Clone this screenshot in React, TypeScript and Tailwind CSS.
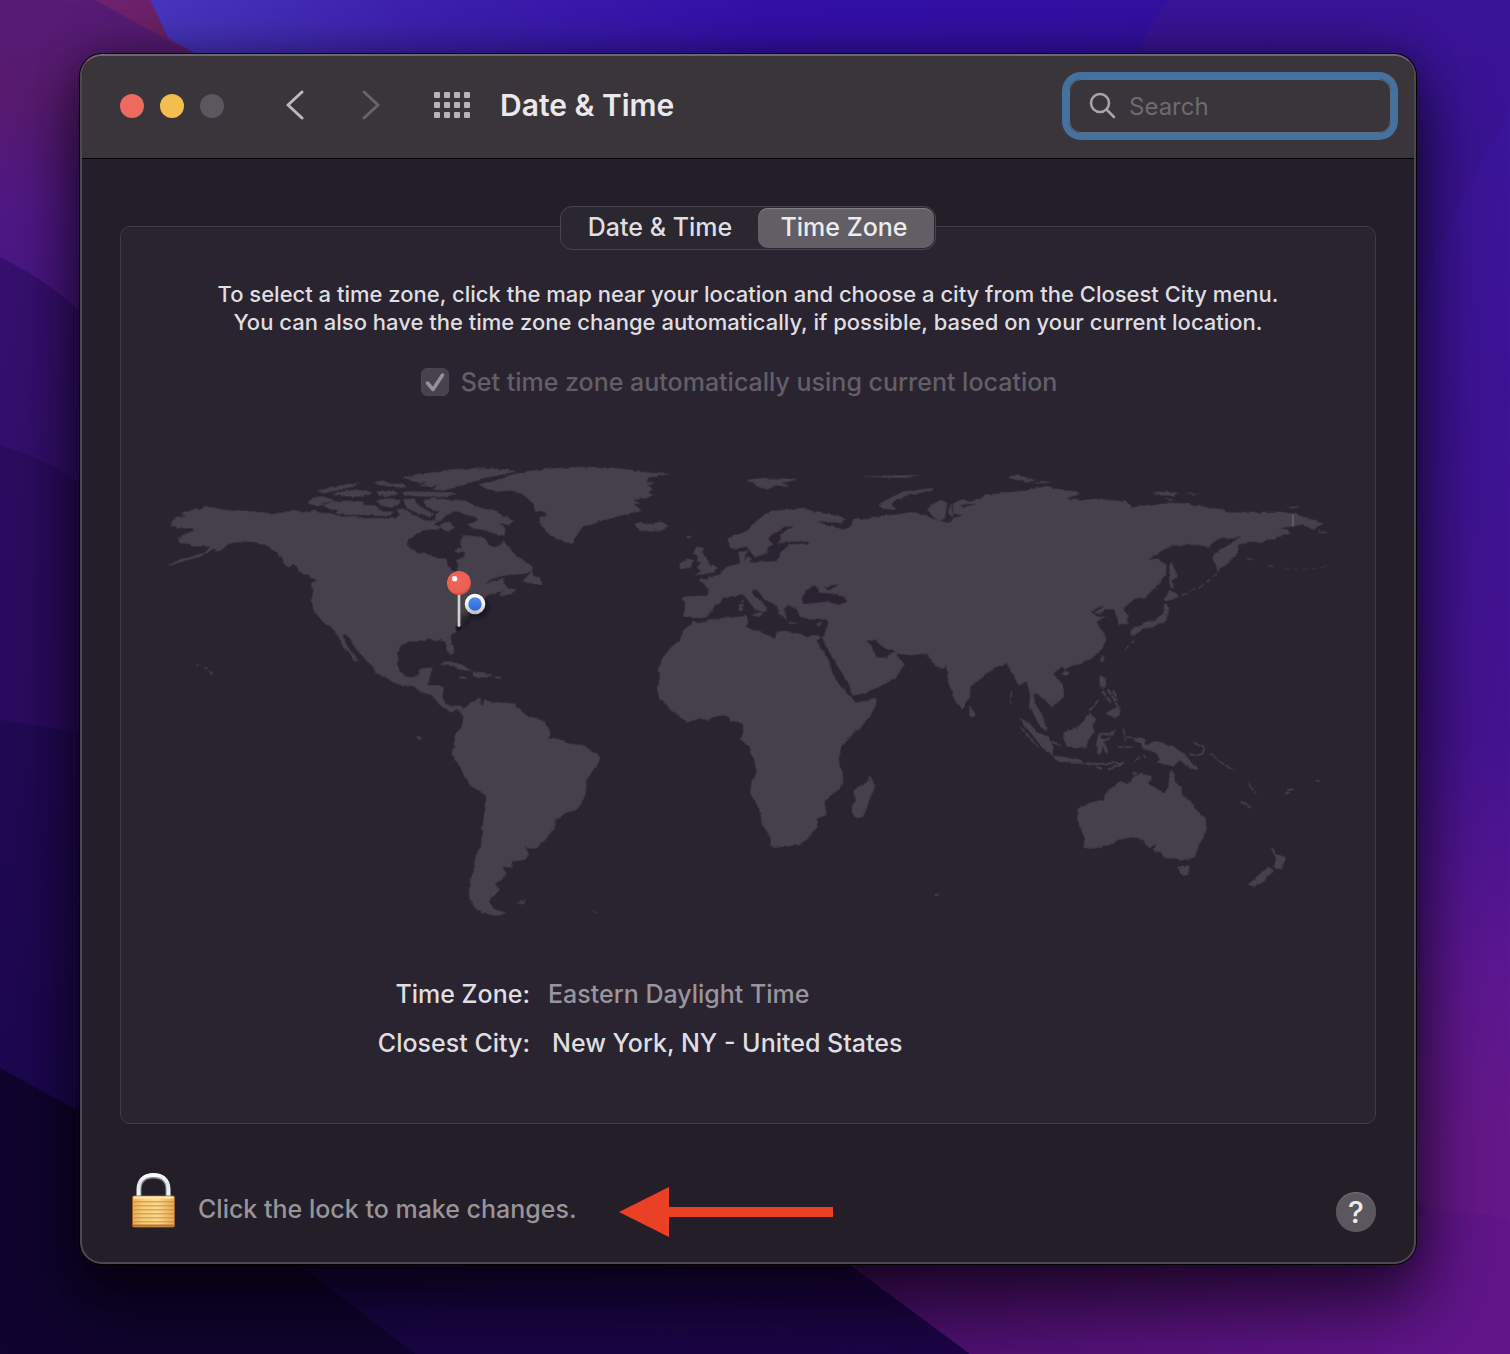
import React from "react";

function Wallpaper() {
  return (
    <svg
      className="absolute inset-0 h-full w-full"
      viewBox="0 0 1510 1354"
      preserveAspectRatio="none"
      aria-hidden="true"
    >
      <defs>
        <linearGradient id="wTop" x1="150" y1="0" x2="1510" y2="0" gradientUnits="userSpaceOnUse">
          <stop offset="0" stopColor="#4736bd" />
          <stop offset="0.2" stopColor="#3d20ad" />
          <stop offset="0.45" stopColor="#3410a8" />
          <stop offset="0.75" stopColor="#3310a0" />
          <stop offset="1" stopColor="#37119a" />
        </linearGradient>
        <linearGradient id="wRight" x1="0" y1="0" x2="0" y2="1354" gradientUnits="userSpaceOnUse">
          <stop offset="0" stopColor="#391496" />
          <stop offset="0.3" stopColor="#3b128e" />
          <stop offset="0.55" stopColor="#441390" />
          <stop offset="0.72" stopColor="#5c1790" />
          <stop offset="0.85" stopColor="#651888" />
          <stop offset="1" stopColor="#5c1384" />
        </linearGradient>
        <linearGradient id="wEdge" x1="0" y1="100" x2="0" y2="800" gradientUnits="userSpaceOnUse">
          <stop offset="0" stopColor="#3a159a" />
          <stop offset="0.5" stopColor="#3e1394" />
          <stop offset="1" stopColor="#45148f" stopOpacity="0" />
        </linearGradient>
        <linearGradient id="wLeft" x1="0" y1="0" x2="0" y2="320" gradientUnits="userSpaceOnUse">
          <stop offset="0" stopColor="#561c76" />
          <stop offset="0.3" stopColor="#591b70" />
          <stop offset="0.65" stopColor="#501885" />
          <stop offset="1" stopColor="#471683" />
        </linearGradient>
        <linearGradient id="wPink" x1="100" y1="0" x2="190" y2="50" gradientUnits="userSpaceOnUse">
          <stop offset="0" stopColor="#702272" />
          <stop offset="1" stopColor="#69205f" />
        </linearGradient>
        <linearGradient id="wL2" x1="0" y1="257" x2="0" y2="480" gradientUnits="userSpaceOnUse">
          <stop offset="0" stopColor="#371071" />
          <stop offset="1" stopColor="#330f6c" />
        </linearGradient>
        <linearGradient id="wL3" x1="0" y1="445" x2="0" y2="730" gradientUnits="userSpaceOnUse">
          <stop offset="0" stopColor="#2c0c60" />
          <stop offset="1" stopColor="#2b0b60" />
        </linearGradient>
        <linearGradient id="wL4" x1="0" y1="720" x2="0" y2="1110" gradientUnits="userSpaceOnUse">
          <stop offset="0" stopColor="#220955" />
          <stop offset="1" stopColor="#1c0750" />
        </linearGradient>
        <linearGradient id="wBottom" x1="300" y1="0" x2="970" y2="0" gradientUnits="userSpaceOnUse">
          <stop offset="0" stopColor="#180645" />
          <stop offset="1" stopColor="#1d0448" />
        </linearGradient>
        <linearGradient id="wPlum" x1="850" y1="0" x2="1400" y2="0" gradientUnits="userSpaceOnUse">
          <stop offset="0" stopColor="#4b0f6c" />
          <stop offset="1" stopColor="#601589" />
        </linearGradient>
      </defs>
      <rect width="1510" height="1354" fill="url(#wTop)" />
      <path d="M1168 0C1145 30 1120 80 1110 140V1354H1510V0Z" fill="url(#wRight)" />
      <path d="M1510 110C1480 170 1430 240 1416 330V800H1510Z" fill="url(#wEdge)" />
      <path d="M0 0H150L168 38L260 90V340H0Z" fill="url(#wLeft)" />
      <path d="M95 0H150L168 38L193 54Z" fill="url(#wPink)" />
      <path d="M0 257C30 272 60 290 100 330V520H0Z" fill="url(#wL2)" />
      <path d="M0 445C30 455 60 465 100 500V760H0Z" fill="url(#wL3)" />
      <path d="M0 720L100 736V1130H0Z" fill="url(#wL4)" />
      <path d="M200 1200H900L970 1354H300Z" fill="url(#wBottom)" />
      <path d="M0 1068L80 1112L290 1258L415 1354H0Z" fill="#10042f" />
      <path d="M760 1200L850 1265L970 1354H1510V1180L1420 1165V1200Z" fill="url(#wPlum)" />
      <path d="M1400 1200C1440 1215 1470 1208 1510 1220V1140H1400Z" fill="#651888" />
    </svg>
  );
}

function WorldMap() {
  return (
    <svg
      className="block h-auto w-full"
      viewBox="0 0 3600 1440"
      role="img"
      aria-label="World map with a pin near New York"
    >
      <defs>
        <filter id="coast" x="0" y="0" width="3600" height="1440" filterUnits="userSpaceOnUse">
          <feTurbulence type="fractalNoise" baseFrequency="0.05" numOctaves="2" seed="4" result="n" />
          <feDisplacementMap in="SourceGraphic" in2="n" scale="10" xChannelSelector="R" yChannelSelector="G" />
        </filter>
        <linearGradient id="dotRing" x1="0" y1="0" x2="0" y2="1">
          <stop offset="0" stopColor="#ffffff" />
          <stop offset="0.5" stopColor="#f2f2f2" />
          <stop offset="1" stopColor="#b9b9bb" />
        </linearGradient>
        <linearGradient id="dotCore" x1="0" y1="0" x2="0" y2="1">
          <stop offset="0" stopColor="#4a8cf7" />
          <stop offset="1" stopColor="#2f68cf" />
        </linearGradient>
        <radialGradient id="pinHead" cx="0.45" cy="0.4" r="0.6">
          <stop offset="0" stopColor="#f0665a" />
          <stop offset="0.8" stopColor="#ea6054" />
          <stop offset="1" stopColor="#c94d43" />
        </radialGradient>
        <filter id="soft" x="-50%" y="-50%" width="200%" height="200%">
          <feGaussianBlur stdDeviation="6" />
        </filter>
      </defs>

      <g filter="url(#coast)" fill="#453f4a">
        {/* North America */}
        <path d="M62 225L78 200L105 200L90 192L130 178L175 170L230 180L290 183L345 188L370 192L400 185L440 182L480 186L490 178L510 188L545 190L575 200L620 198L645 204L690 204L735 205L750 195L745 180L770 185L790 195L810 200L835 215L860 205L865 215L850 222L880 232L865 240L845 238L820 242L800 252L780 265L770 280L785 298L810 308L840 315L865 325L890 325L892 345L905 360L918 365L925 350L918 330L940 322L945 308L930 290L932 270L940 255L975 258L1000 262L1015 285L1030 292L1050 285L1062 272L1080 295L1100 318L1125 335L1148 350L1148 362L1120 372L1080 375L1055 378L1030 385L1005 403L1035 390L1065 385L1060 400L1075 415L1100 418L1112 410L1090 427L1060 438L1048 434L1060 422L1040 427L1015 435L1005 445L1000 460L975 480L955 500L950 515L935 525L915 545L902 558L905 575L912 595L912 612L905 618L893 600L885 575L865 570L855 575L840 565L820 570L800 575L775 575L750 590L745 610L742 640L750 660L765 678L785 682L805 675L812 655L848 652L840 680L832 705L870 707L882 712L877 745L890 765L915 770L930 765L942 775L935 787L920 777L905 788L880 775L860 755L845 735L810 725L790 708L750 705L715 690L675 665L668 650L640 622L620 600L600 570L590 555L578 552L585 575L600 600L615 615L628 635L615 630L600 610L580 595L570 570L555 545L545 535L525 522L505 500L490 480L485 450L490 420L485 398L500 392L480 380L455 370L435 345L415 350L400 340L395 320L375 305L355 290L330 280L290 275L255 278L235 282L215 300L195 308L195 295L150 320L110 332L60 347L55 345L90 328L130 318L165 305L180 290L150 290L125 290L120 282L90 280L82 262L110 250L132 240L130 235L80 235Z" />
        {/* Arctic archipelago */}
        <path d="M472 160L485 143L515 138L555 150L520 160L505 172ZM515 165L545 155L600 152L640 155L640 165L670 165L700 185L730 185L725 195L690 198L640 195L590 195L555 190L565 180L540 178ZM545 135L575 125L620 118L655 125L668 130L640 140L600 140ZM498 124L540 112L590 102L630 98L600 112L560 122L520 128ZM665 95L700 92L725 102L760 100L770 112L730 112L690 105ZM675 125L710 120L745 128L735 138L690 138ZM680 150L710 145L748 148L745 165L715 172L690 165ZM755 85L800 72L860 65L900 58L980 55L1070 58L1100 65L1050 75L1000 85L970 95L930 110L880 122L840 118L860 110L800 108L830 100L790 95ZM760 124L840 125L900 127L925 132L880 141L800 139L760 134ZM760 148L790 145L800 160L820 175L850 190L840 202L800 188L770 175ZM740 178L760 175L775 190L750 198ZM820 150L850 144L900 148L950 152L970 165L1010 178L1040 182L1060 200L1093 212L1075 225L1050 220L1070 240L1060 258L1030 250L1000 240L965 234L950 225L985 205L950 195L920 185L890 195L870 215L850 205L865 185L830 172ZM870 222L900 215L915 232L895 245L875 238ZM915 300L935 292L945 305L925 312ZM1125 385L1145 362L1150 378L1170 382L1177 400L1170 406L1145 400L1120 398Z" />
        {/* Caribbean and Hawaii */}
        <path d="M868 642L895 633L925 640L950 652L970 664L935 660L905 646ZM968 666L1000 666L1028 678L985 684L970 680ZM930 680h18v6h-18ZM1036 680h18v6h-18ZM176 662L190 668L184 677ZM140 644h8v6h-8ZM162 652h8v5h-8Z" />
        {/* Greenland, Iceland, South America */}
        <g transform="translate(750 0)">
          <path d="M232 103L270 95L300 88L330 75L390 62L450 55L550 50L640 53L700 60L720 65L810 72L770 80L745 82L740 95L765 100L745 105L760 115L745 130L760 135L735 145L700 150L725 160L700 162L728 180L690 190L650 200L600 215L575 225L550 228L535 250L515 282L490 272L465 265L440 245L420 220L418 205L440 195L435 185L405 185L400 165L385 145L360 130L330 122L290 125L265 118ZM702 222L725 216L735 225L760 218L785 215L805 228L790 240L750 245L720 240Z" />
          <path d="M192 775L210 758L240 742L240 765L250 765L250 745L270 755L310 758L345 760L350 770L385 800L420 805L440 820L452 850L445 870L460 862L505 880L550 885L580 907L597 912L600 935L580 960L560 990L558 1030L545 1060L530 1080L495 1090L468 1110L465 1130L440 1165L410 1195L385 1195L372 1185L388 1215L375 1230L337 1235L333 1253L308 1250L320 1270L305 1290L285 1300L300 1320L275 1340L268 1355L280 1375L318 1388L285 1398L250 1390L225 1375L208 1350L207 1310L218 1265L228 1215L243 1180L248 1120L258 1060L257 1037L210 1005L195 985L178 945L152 910L155 895L165 890L158 880L165 855L185 830L190 800L180 785ZM345 1358L378 1353L370 1363ZM570 1380L592 1388L585 1390ZM50 858h14v8h-14Z" />
        </g>
        {/* Africa, Europe, Asia */}
        <g transform="translate(1440 0)">
          <path d="M192 512L205 520L240 510L280 503L320 500L348 498L355 515L348 530L395 545L435 567L440 545L465 542L490 550L530 558L560 555L575 562L560 572L580 605L600 640L608 670L630 705L665 742L675 758L740 745L738 765L715 810L670 850L640 885L625 915L630 950L638 965L640 1000L625 1020L583 1052L590 1095L565 1105L560 1135L530 1170L505 1185L435 1194L422 1185L422 1165L395 1120L387 1075L360 1030L365 990L380 970L372 930L360 895L332 868L340 845L338 825L325 815L303 817L290 797L265 797L230 812L205 808L170 815L120 780L110 765L88 745L80 715L90 685L82 655L105 610L125 590L150 570L155 545L180 525ZM722 975L735 1010L720 1045L700 1100L680 1105L667 1095L665 1070L677 1045L672 1020L700 1005L715 985Z" />
          <path d="M158 440L200 437L235 438L235 415L225 402L203 393L205 388L232 388L235 380L265 375L290 350L330 340L325 310L345 303L355 300L345 315L345 330L360 338L400 335L440 333L448 325L450 305L475 292L470 283L530 280L540 275L490 275L450 280L415 290L410 310L375 322L360 305L350 290L315 298L298 290L292 265L310 258L355 240L365 225L385 208L405 192L430 183L470 178L520 173L545 182L590 188L630 198L645 208L635 218L600 218L565 212L585 225L620 232L640 238L665 225L675 205L700 210L750 198L810 192L845 186L880 192L920 212L950 215L965 200L955 190L960 165L990 150L1020 155L1070 135L1120 128L1180 122L1250 108L1290 118L1345 125L1345 135L1310 145L1350 148L1440 150L1490 155L1505 172L1530 168L1570 165L1620 158L1670 160L1720 170L1780 178L1795 187L1870 185L1890 192L1895 185L1950 185L2000 192L2035 208L2082 220L2060 230L2055 237L2010 225L1990 230L1950 233L1975 240L1980 252L1940 262L1895 278L1860 275L1825 285L1825 310L1800 335L1762 365L1750 320L1770 298L1800 282L1832 258L1800 270L1785 262L1760 270L1735 290L1700 285L1630 287L1600 300L1555 328L1580 325L1610 345L1605 375L1580 410L1545 442L1520 445L1500 458L1480 475L1495 495L1495 520L1465 527L1462 505L1450 480L1430 476L1410 492L1392 490L1425 465L1382 485L1405 500L1430 498L1400 515L1420 545L1430 570L1405 610L1360 638L1320 650L1305 660L1295 650L1270 672L1300 705L1302 740L1265 775L1255 760L1230 740L1215 730L1212 755L1235 790L1253 845L1230 830L1205 780L1197 775L1200 735L1190 695L1165 707L1150 675L1130 642L1090 652L1080 665L1022 710L1020 745L995 780L980 760L955 700L948 648L940 657L920 650L890 613L845 615L798 612L790 598L770 600L745 580L735 568L712 570L725 590L740 622L770 622L793 606L825 645L800 680L750 710L700 730L668 738L655 700L620 645L585 585L575 560L582 557L595 515L590 508L560 510L530 505L510 500L500 478L470 465L462 480L472 512L450 490L435 465L400 445L385 425L375 418L365 425L375 440L405 465L412 475L400 490L375 478L345 440L335 432L315 440L285 440L270 455L245 480L230 502L195 505L180 500L160 500L165 470Z" />
          <path d="M345 340L350 318L366 325L360 338ZM185 310L200 291L227 292L215 305L225 320L240 345L264 352L250 368L195 376L215 360L200 352L212 340L200 330L205 318ZM148 358L150 340L170 326L192 330L185 352ZM328 482L328 462L341 462L338 482ZM332 458L335 445L341 456ZM363 490L397 490L388 504ZM475 515L500 518L500 522L476 520ZM556 522L582 514L568 527ZM463 290L482 300L470 308ZM172 258h12v6h-12Z" />
          <path d="M745 165L775 145L820 125L910 114L908 122L840 134L795 150L785 163L800 180L760 177ZM890 182L905 163L935 150L952 158L950 178L945 205L925 214ZM346 90L400 84L505 87L480 95L455 98L482 108L440 106L410 120L380 105ZM685 80L780 76L870 74L830 84L760 82ZM1130 82L1160 74L1216 90L1190 98ZM1208 101L1235 92L1266 98ZM1570 130L1580 124L1648 129L1630 137L1580 136ZM1660 129L1706 133L1690 137ZM1600 145L1636 149L1620 153ZM1974 172L1990 167L2012 170L1990 175ZM2066 244h26v5h-26Z" />
          {/* Japan, Sakhalin, Sri Lanka */}
          <path d="M1500 543L1515 530L1550 515L1575 508L1600 490L1603 458L1618 475L1614 495L1605 517L1585 522L1565 533L1540 535L1520 552L1505 558ZM1600 450L1618 420L1652 438L1630 448L1608 454ZM1618 345L1628 335L1643 385L1628 390L1632 415L1618 412ZM1018 765L1038 790L1030 803L1018 798Z" />
          <path d="M1655 436Q1720 415 1760 368M1850 325l16 4M1915 346l14 5M1485 602L1512 570" fill="none" stroke="#453f4a" strokeWidth="4" strokeDasharray="18 10" />
          <path d="M1960 356Q2040 362 2090 348" fill="none" stroke="#453f4a" strokeWidth="2" strokeDasharray="18 10" />
        </g>
        {/* South-East Asia and Oceania */}
        <g transform="translate(2370 570)">
          <path d="M235 233L265 245L290 275L325 290L340 320L338 345L310 325L275 285ZM336 346L370 350L422 362L436 373L380 367L345 360ZM370 280L385 270L410 265L440 228L450 220L470 238L458 255L464 278L445 300L438 325L410 322L380 317L370 300ZM482 110L496 110L500 130L490 147L477 142ZM500 217L520 205L537 200L540 225L525 234L505 225ZM480 70L482 55L493 43L492 62ZM364 100L375 92L390 97L378 111Z" />
          <path d="M580 300L600 291L615 300L614 315L630 310L650 303L700 318L735 345L750 360L777 391L750 385L720 362L700 378L675 374L650 368L660 355L640 335L610 327L600 312Z" />
          <path d="M412 540L413 505L450 488L490 478L500 455L540 423L565 432L580 410L605 402L638 408L625 430L675 460L685 440L690 388L700 400L708 428L720 435L730 470L755 485L770 510L797 535L800 570L775 620L765 652L720 662L705 658L672 652L658 632L640 635L648 612L628 625L605 597L575 592L535 600L510 615L450 627L430 622L434 595ZM711 680L749 680L745 705L732 711ZM988 620L1012 642L1041 653L1020 689L998 680L1008 655ZM985 680L1002 690L972 725L945 739L922 735L955 705Z" />
          {/* Sulawesi */}
          <path d="M528 266L522 282L508 286L484 285L482 296L496 296L512 288L506 298L492 306L506 336L498 340L486 318L482 342L471 342L473 320L467 318L474 286L484 278L512 279Z" />
          <g fill="none" stroke="#453f4a" strokeLinecap="round">
            <path d="M450 210L478 178M490 155L512 188M505 150L520 175L532 198M520 155L530 180" strokeWidth="7" strokeDasharray="14 9" />
            <path d="M436 371L480 372L545 368M505 388L550 370M468 380L485 386" strokeWidth="6" />
            <path d="M242 262L295 322M550 268L556 300M535 321L582 321M560 290L590 296M612 345l4 8M575 402h24M586 360l12 -6" strokeWidth="5" strokeDasharray="16 8" />
            <path d="M750 343L780 344L796 326M762 308L790 322" strokeWidth="6" />
            <path d="M812 342L850 372L882 390M928 432L944 458M214 155L212 188" strokeWidth="5" strokeDasharray="20 8" />
            <path d="M904 486L930 502M1034 460L1046 458M1045 450L1058 448M1130 420l8 4M336 305L360 316M-14 764l8 1" strokeWidth="6" />
          </g>
        </g>
      </g>

      {/* Inland seas */}
      <g filter="url(#coast)" fill="#2a2430">
        <path d="M1955 445L1970 420L1988 408L2010 418L2008 428L2040 430L2080 440L2092 455L2070 464L2030 455L2000 458L1960 462ZM2022 412L2066 402L2042 421ZM1855 267L1868 250L1890 245L1900 232L1932 224L1912 240L1890 251L1893 272L1875 284L1862 278Z" />
        <path d="M1870 280h28v14h-36ZM2402 165L2410 195L2396 212L2380 218L2400 217L2412 198L2406 165ZM2412 190L2440 196L2410 203ZM2430 165L2480 160L2440 172Z" />
      </g>
      <path d="M3429 193v37" stroke="#625d67" strokeWidth="5" />

      {/* Current location dot */}
      <ellipse cx="984" cy="474" rx="30" ry="30" fill="#100c14" opacity="0.7" filter="url(#soft)" />
      <path d="M925 535L935 500L965 490L955 518Z" fill="#15121a" opacity="0.75" filter="url(#soft)" />
      <circle cx="975" cy="462" r="31" fill="url(#dotRing)" />
      <circle cx="975" cy="462" r="20" fill="url(#dotCore)" />

      {/* Pin */}
      <ellipse cx="925" cy="535" rx="9" ry="7" fill="#0e0c11" opacity="0.6" />
      <rect x="923" y="432" width="8" height="98" rx="3" fill="#d2d0d4" />
      <circle cx="927" cy="399" r="36" fill="url(#pinHead)" />
      <circle cx="914" cy="386" r="8" fill="#fff" />
    </svg>
  );
}

function GridIcon() {
  return (
    <svg className="h-[26px] w-9" viewBox="0 0 36 26" fill="#b6b3b9" aria-hidden="true">
      {[0, 10, 20].map((y) =>
        [0, 10, 20, 30].map((x) => <rect key={`${x}-${y}`} x={x} y={y} width="6" height="6" rx="1" />),
      )}
    </svg>
  );
}

function LockIcon() {
  return (
    <svg className="h-14 w-11" viewBox="0 0 44 56" aria-hidden="true">
      <defs>
        <linearGradient id="brass" x1="0" y1="0" x2="1" y2="0">
          <stop offset="0" stopColor="#e8ad58" />
          <stop offset="0.25" stopColor="#f6cc78" />
          <stop offset="0.6" stopColor="#fad98e" />
          <stop offset="1" stopColor="#e6aa55" />
        </linearGradient>
        <linearGradient id="steel" x1="0" y1="0" x2="0" y2="1">
          <stop offset="0" stopColor="#ffffff" />
          <stop offset="0.4" stopColor="#dfe6ea" />
          <stop offset="1" stopColor="#f4f8fa" />
        </linearGradient>
      </defs>
      <path d="M7.500 25V18C7.500 9 13.500 4.500 21.500 4.500S35.500 9 35.500 18V25" fill="none" stroke="#7d8890" strokeWidth="4" />
      <path d="M6.500 25V17C6.500 7.500 13 3 21.500 3S36.500 7.500 36.500 17V25" fill="none" stroke="url(#steel)" strokeWidth="4" />
      <rect x="0.500" y="24" width="42" height="31" rx="1.500" fill="url(#brass)" stroke="#a8611f" strokeWidth="1" />
      <rect x="1.500" y="24.500" width="40" height="2" fill="#fff0b8" />
      {[29, 33, 37, 41, 45, 49].map((y) => (
        <rect key={y} x="1" y={y} width="41" height="1.500" fill="#c98536" opacity="0.6" />
      ))}
      <rect x="1" y="52.500" width="41" height="2" fill="#b8722c" />
    </svg>
  );
}

export default function App() {
  return (
    <div className="relative isolate min-h-screen overflow-hidden bg-[#1c0750] pt-[54px] pr-[94px] pb-[90px] pl-20 font-['Inter','Liberation_Sans',sans-serif] text-[25px] leading-8 font-medium text-[#dfdee0]">
      <Wallpaper />
      <div className="relative rounded-[22px] shadow-[0_0_0_1px_#000,0_36px_70px_8px_rgba(0,0,0,0.6),0_0_40px_rgba(0,0,0,0.35)]">
        <main className="overflow-hidden rounded-[22px] border-2 border-[#4c4952] border-t-[#6b696e] bg-[#241e29]">
          <header className="flex h-[103px] items-center border-b border-black bg-[#39353b] pr-[23px] pb-0.5 pl-[38px]">
            <div className="flex gap-4">
              <button aria-label="Close" className="size-6 rounded-full bg-[#ed6a5e]" />
              <button aria-label="Minimize" className="size-6 rounded-full bg-[#f4be4f]" />
              <button aria-label="Zoom" disabled className="size-6 rounded-full bg-[#5b575e]" />
            </div>
            <nav className="ml-[60px] flex items-center pb-0.5">
              <button aria-label="Back">
                <svg className="h-8 w-5" viewBox="0 0 20 32" fill="none" stroke="#bbb8be" strokeWidth="3" strokeLinecap="round" strokeLinejoin="round">
                  <path d="M18 3L4 16L18 29" />
                </svg>
              </button>
              <button aria-label="Forward" disabled className="ml-[56px]">
                <svg className="h-8 w-5" viewBox="0 0 20 32" fill="none" stroke="#67646a" strokeWidth="3" strokeLinecap="round" strokeLinejoin="round">
                  <path d="M4 3L18 16L4 29" />
                </svg>
              </button>
              <button aria-label="Show all" className="ml-[54px]">
                <GridIcon />
              </button>
            </nav>
            <h1 className="ml-[30px] pb-0.5 text-[30px] font-semibold text-[#e9e8ea]">Date &amp; Time</h1>
            <label className="ml-auto flex h-[54px] w-[322px] items-center gap-3 rounded-xl border border-[#5d6f86] pl-[19px] ring-[7px] ring-[#45719f]">
              <svg className="size-7 shrink-0" viewBox="0 0 28 28" fill="none" stroke="#a8a5ab" strokeWidth="2.500" strokeLinecap="round" aria-hidden="true">
                <circle cx="11" cy="11" r="9" />
                <path d="M17.500 17.500L25 25" />
              </svg>
              <input
                type="search"
                aria-label="Search"
                placeholder="Search"
                className="w-full min-w-0 bg-transparent pt-0.5 text-[24px] font-normal outline-none placeholder:text-[#6d6a70]"
              />
            </label>
          </header>

          <section className="mx-[38px] mt-[67px] rounded-[10px] border border-[#403b45] bg-[#2a2430] pb-16">
            <div role="tablist" className="mx-auto -mt-[21px] flex h-11 w-[376px] rounded-xl border border-[#49454e] bg-[#2b2731] p-px">
              <button role="tab" aria-selected="false" className="flex-1 rounded-[10px] pb-0.5">
                Date &amp; Time
              </button>
              <button
                role="tab"
                aria-selected="true"
                className="w-44 rounded-[10px] bg-[#615e65] pr-1 pb-0.5 text-[#ececed] inset-shadow-[0_1px_0_#817e84]"
              >
                Time Zone
              </button>
            </div>

            <p className="mt-[30px] text-center text-[22px] leading-7 font-[450]">
              To select a time zone, click the map near your location and choose a city from the Closest City menu.
              <br />
              You can also have the time zone change automatically, if possible, based on your current location.
            </p>

            <div className="mt-[30px] flex h-8 items-center justify-center pr-[18px] text-[#625f67]">
              <span className="grid size-7">
                <input
                  id="auto-zone"
                  type="checkbox"
                  defaultChecked
                  disabled
                  className="col-start-1 row-start-1 size-7 appearance-none rounded-md border border-[#49454f] bg-[#47434d]"
                />
                <svg
                  className="pointer-events-none col-start-1 row-start-1 size-7"
                  viewBox="0 0 28 28"
                  fill="none"
                  stroke="#949197"
                  strokeWidth="3.500"
                  strokeLinecap="round"
                  strokeLinejoin="round"
                  aria-hidden="true"
                >
                  <path d="M6.500 15L12 21.500L21.500 7" />
                </svg>
              </span>
              <label htmlFor="auto-zone" className="ml-3">
                Set time zone automatically using current location
              </label>
            </div>

            <div className="mt-[52px] pr-[25px] pl-[29px]">
              <WorldMap />
            </div>

            <div className="mt-12 grid grid-cols-[409fr_845fr] gap-y-[17px]">
              <span className="text-right">Time Zone:</span>
              <output className="pl-[18px] text-[#98959c]">Eastern Daylight Time</output>
              <label htmlFor="city" className="text-right">
                Closest City:
              </label>
              <div className="pl-[22px]">
                <select id="city" className="block appearance-none bg-transparent leading-8 outline-none">
                  <option>New York, NY - United States</option>
                </select>
              </div>
            </div>
          </section>

          <footer className="mt-12 flex h-[90px] items-center pr-[38px] pb-2.5 pl-[50px]">
            <button aria-label="Unlock" className="pb-6">
              <LockIcon />
            </button>
            <span className="ml-[22px] pb-1.5 text-[#98959a]">Click the lock to make changes.</span>
            <svg className="ml-[42px] h-[50px] w-[214px] shrink-0" viewBox="0 0 214 50" fill="#ea4026" aria-hidden="true">
              <path d="M0 25L50 0V20H214V30H50V50Z" />
            </svg>
            <button
              aria-label="Help"
              className="ml-auto grid size-10 place-items-center rounded-full bg-[#5b575e] text-[30px] font-medium text-[#ececed] inset-shadow-[0_1px_0_#716e74]"
            >
              ?
            </button>
          </footer>
        </main>
      </div>
    </div>
  );
}
